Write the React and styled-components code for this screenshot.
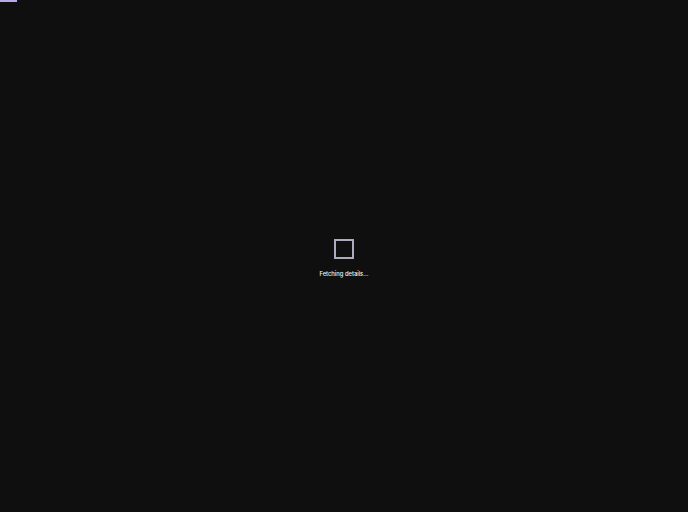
import React from "react";
import styled, { createGlobalStyle } from "styled-components";

const GlobalStyle = createGlobalStyle`
  html, body {
    margin: 0;
    padding: 0;
    background: #0f0f0f;
  }
  body {
    font-family: Inter, "Noto Sans", sans-serif;
  }
`;

const Page = styled.div`
  position: relative;
  box-sizing: border-box;
  width: 100vw;
  height: 100vh;
  padding-top: 4px;
  display: flex;
  flex-direction: column;
  align-items: center;
  justify-content: center;
  gap: 11px;
  background: #0f0f0f;
`;

const ProgressBar = styled.div`
  position: absolute;
  top: 0;
  left: 0;
  width: 17px;
  height: 2px;
  background: #b8a8ea;
`;

const Spinner = styled.div`
  width: 16px;
  height: 16px;
  border: 2px solid #aeaabf;
`;

const Label = styled.p`
  margin: 0;
  font-size: 5.8px;
  font-weight: 500;
  line-height: 8px;
  color: #f5f5f5;
`;

export default function App() {
  return (
    <>
      <GlobalStyle />
      <Page>
        <ProgressBar />
        <Spinner />
        <Label>Fetching details...</Label>
      </Page>
    </>
  );
}
